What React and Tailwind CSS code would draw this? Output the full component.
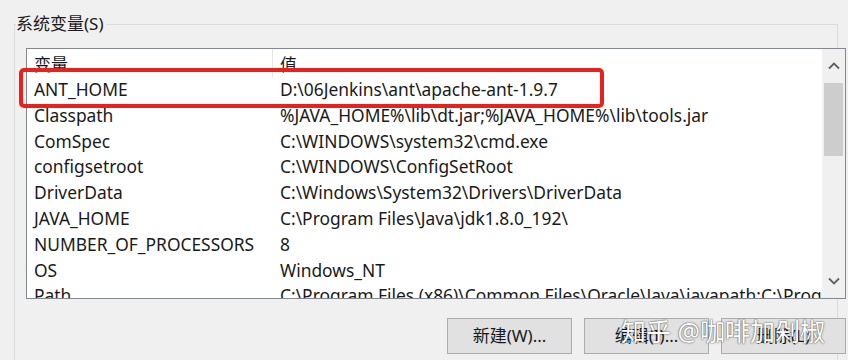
import React from 'react';

const rows = [
  ['ANT_HOME', 'D:\\06Jenkins\\ant\\apache-ant-1.9.7'],
  ['Classpath', '%JAVA_HOME%\\lib\\dt.jar;%JAVA_HOME%\\lib\\tools.jar'],
  ['ComSpec', 'C:\\WINDOWS\\system32\\cmd.exe'],
  ['configsetroot', 'C:\\WINDOWS\\ConfigSetRoot'],
  ['DriverData', 'C:\\Windows\\System32\\Drivers\\DriverData'],
  ['JAVA_HOME', 'C:\\Program Files\\Java\\jdk1.8.0_192\\'],
  ['NUMBER_OF_PROCESSORS', '8'],
  ['OS', 'Windows_NT'],
  ['Path', 'C:\\Program Files (x86)\\Common Files\\Oracle\\Java\\javapath;C:\\Program Files'],
];

const font = { fontFamily: '"Noto Sans", "Noto Sans CJK SC", sans-serif' };

const Chevron = ({ down }) => (
  <svg width="12" height="8" viewBox="0 0 12 8" fill="none">
    <path
      d={down ? 'M1 1.5 L6 6.5 L11 1.5' : 'M1 6.5 L6 1.5 L11 6.5'}
      stroke="#606060"
      strokeWidth="1.8"
    />
  </svg>
);

const App = () => {
  return (
    <div
      className="relative w-[848px] h-[360px] overflow-hidden bg-[#f0f0f0] text-[#1a1a1a]"
      style={font}
    >
      {/* group box */}
      <div className="absolute left-[14px] top-[24px] w-[824px] h-[400px] border border-[#dcdcdc]" />
      <div className="relative pl-[16px] pt-[12px] h-[36px]">
        <span className="bg-[#f0f0f0] pr-[2px] text-[17px] leading-[24px]">系统变量(S)</span>
      </div>

      {/* list view */}
      <div className="relative ml-[26px] mt-[12px] w-[820px] h-[251px] border border-[#828790] bg-white flex overflow-hidden">
        <div className="flex-1 overflow-hidden">
          <div className="flex h-[28px] text-[17px] leading-[26px]">
            <div className="w-[246px] pl-[7px] pt-[3px] border-r border-[#e5e5e5]">变量</div>
            <div className="pl-[7px] pt-[3px]">值</div>
          </div>
          {rows.map(([k, v]) => (
            <div key={k} className="flex h-[25.8px] text-[17.4px] leading-[25.8px] whitespace-nowrap">
              <div className="w-[246px] pl-[7px] shrink-0">{k}</div>
              <div className="pl-[7px]">{v}</div>
            </div>
          ))}
        </div>
        <div className="w-[23px] shrink-0 bg-[#f0f0f0] flex flex-col">
          <div className="h-[34px] flex items-center justify-center">
            <Chevron />
          </div>
          <div className="mx-[2px] h-[73px] bg-[#cdcdcd]" />
          <div className="flex-1" />
          <div className="h-[34px] flex items-center justify-center">
            <Chevron down />
          </div>
        </div>
      </div>

      {/* buttons */}
      <div className="relative flex gap-[12px] ml-[447px] mt-[19px]">
        {['新建(W)...', '编辑(I)...', '删除(L)'].map((t) => (
          <div
            key={t}
            className="w-[125px] h-[36px] shrink-0 bg-[#e1e1e1] border border-[#adadad] flex items-center justify-center text-[17px]"
          >
            {t}
          </div>
        ))}
      </div>

      {/* red annotation */}
      <div className="absolute left-[19px] top-[68px] w-[585px] h-[40px] border-[4px] border-[#e8211c] rounded-[5px]" />

      {/* watermark */}
      <div
        className="absolute left-[621px] top-[314px] text-[25px] leading-[34px] text-white whitespace-nowrap"
        style={{ textShadow: '0 0 2px rgba(0,0,0,0.6), 0 0 1px rgba(0,0,0,0.5)' }}
      >
        知乎 @咖啡加剁椒
      </div>
    </div>
  );
};

export default App;
